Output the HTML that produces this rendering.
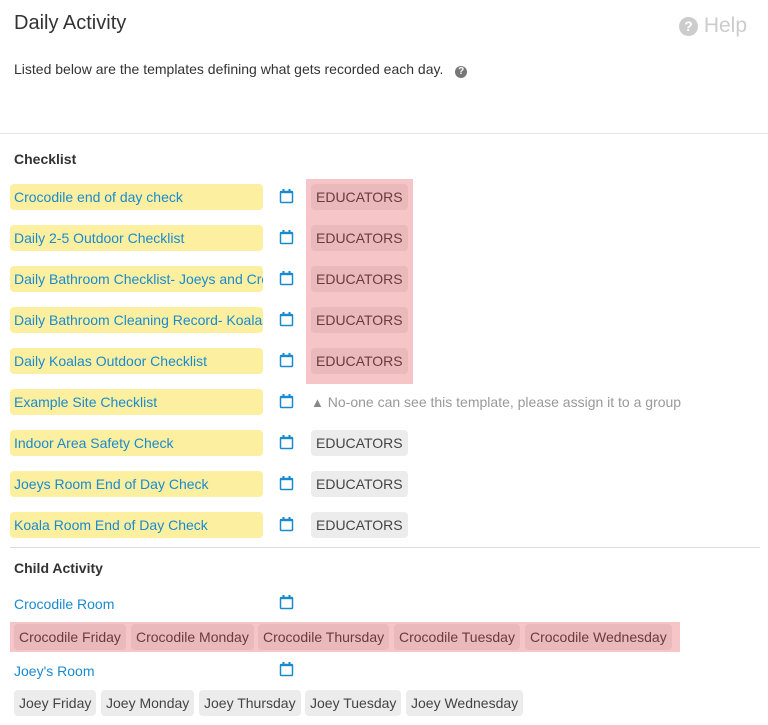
<!DOCTYPE html>
<html><head><style>
*{margin:0;padding:0;box-sizing:border-box}
body{width:768px;height:725px;background:#fff;font-family:"Liberation Sans",Arial,sans-serif;position:relative;overflow:hidden;color:#333}
.a{position:absolute}
.y{position:absolute;left:10px;width:253px;height:26px;background:#fcf0a0;border-radius:4px;color:#1a8ad0;font-size:14px;line-height:26px;padding-left:4px;white-space:nowrap;overflow:hidden}
.t{position:absolute;height:26px;line-height:26px;background:#ececec;border-radius:4px;font-size:14px;padding:0 5px;color:#444;white-space:nowrap}
.p{background:#e9b9bc;color:#6b3a3e}
.cal{position:absolute;width:15px;height:16px}
.l{color:#1a8ad0;font-size:14px;position:absolute}
</style></head><body>
<svg width="0" height="0" style="position:absolute"><defs><g id="c"><rect x="1.5" y="3.5" width="12" height="11" fill="none" stroke="#1a8ad0" stroke-width="1.5" rx="1"/><rect x="1" y="3" width="13" height="2.2" fill="#1a8ad0"/><rect x="3.5" y="1" width="2" height="3.5" fill="#1a8ad0"/><rect x="9.5" y="1" width="2" height="3.5" fill="#1a8ad0"/></g></defs></svg>
<div class="a" style="left:14px;top:12px;font-size:20px;color:#333">Daily Activity</div>
<div class="a" style="left:679px;top:14px;font-size:21px;color:#ccc"><span style="display:inline-block;width:19px;height:19px;border-radius:50%;background:#ccc;color:#fff;font-size:14px;text-align:center;line-height:19px;font-weight:bold;vertical-align:1px">?</span> Help</div>
<div class="a" style="left:14px;top:61px;font-size:14px;color:#333">Listed below are the templates defining what gets recorded each day. <span style="display:inline-block;width:12px;height:12px;border-radius:50%;background:#777;color:#fff;font-size:10px;text-align:center;line-height:12px;font-weight:bold;margin-left:8px">?</span></div>
<div class="a" style="left:0;top:133px;width:768px;height:1px;background:#e5e5e5"></div>
<div class="a" style="left:14px;top:151px;font-size:14px;font-weight:bold">Checklist</div>
<div class="a" style="left:306px;top:179px;width:107px;height:205px;background:#f6c5c8"></div>

<div class="y" style="top:184px">Crocodile end of day check</div>
<div class="y" style="top:225px">Daily 2-5 Outdoor Checklist</div>
<div class="y" style="top:266px">Daily Bathroom Checklist- Joeys and Crocodiles</div>
<div class="y" style="top:307px">Daily Bathroom Cleaning Record- Koalas</div>
<div class="y" style="top:348px">Daily Koalas Outdoor Checklist</div>
<div class="y" style="top:389px">Example Site Checklist</div>
<div class="y" style="top:430px">Indoor Area Safety Check</div>
<div class="y" style="top:471px">Joeys Room End of Day Check</div>
<div class="y" style="top:512px">Koala Room End of Day Check</div>

<svg class="cal" style="left:279px;top:188px"><use href="#c"/></svg>
<svg class="cal" style="left:279px;top:229px"><use href="#c"/></svg>
<svg class="cal" style="left:279px;top:270px"><use href="#c"/></svg>
<svg class="cal" style="left:279px;top:311px"><use href="#c"/></svg>
<svg class="cal" style="left:279px;top:352px"><use href="#c"/></svg>
<svg class="cal" style="left:279px;top:393px"><use href="#c"/></svg>
<svg class="cal" style="left:279px;top:434px"><use href="#c"/></svg>
<svg class="cal" style="left:279px;top:475px"><use href="#c"/></svg>
<svg class="cal" style="left:279px;top:516px"><use href="#c"/></svg>

<div class="t p" style="left:311px;top:184px">EDUCATORS</div>
<div class="t p" style="left:311px;top:225px">EDUCATORS</div>
<div class="t p" style="left:311px;top:266px">EDUCATORS</div>
<div class="t p" style="left:311px;top:307px">EDUCATORS</div>
<div class="t p" style="left:311px;top:348px">EDUCATORS</div>
<div class="a" style="left:311px;top:394px;font-size:14px;color:#999"><span style="font-size:13px;color:#888">&#9650;</span> No-one can see this template, please assign it to a group</div>
<div class="t" style="left:311px;top:430px">EDUCATORS</div>
<div class="t" style="left:311px;top:471px">EDUCATORS</div>
<div class="t" style="left:311px;top:512px">EDUCATORS</div>

<div class="a" style="left:10px;top:547px;width:750px;height:1px;background:#ddd"></div>
<div class="a" style="left:14px;top:560px;font-size:14px;font-weight:bold">Child Activity</div>
<div class="l" style="left:14px;top:596px">Crocodile Room</div>
<svg class="cal" style="left:279px;top:594px"><use href="#c"/></svg>
<div class="a" style="left:10px;top:622px;width:670px;height:30px;background:#f6c5c8"></div>
<div class="t p" style="left:14px;top:624px">Crocodile Friday</div>
<div class="t p" style="left:131px;top:624px">Crocodile Monday</div>
<div class="t p" style="left:258px;top:624px">Crocodile Thursday</div>
<div class="t p" style="left:394px;top:624px">Crocodile Tuesday</div>
<div class="t p" style="left:525px;top:624px">Crocodile Wednesday</div>
<div class="l" style="left:14px;top:663px">Joey's Room</div>
<svg class="cal" style="left:279px;top:661px"><use href="#c"/></svg>
<div class="t" style="left:14px;top:690px">Joey Friday</div>
<div class="t" style="left:101px;top:690px">Joey Monday</div>
<div class="t" style="left:199px;top:690px">Joey Thursday</div>
<div class="t" style="left:305px;top:690px">Joey Tuesday</div>
<div class="t" style="left:406px;top:690px">Joey Wednesday</div>
</body></html>
